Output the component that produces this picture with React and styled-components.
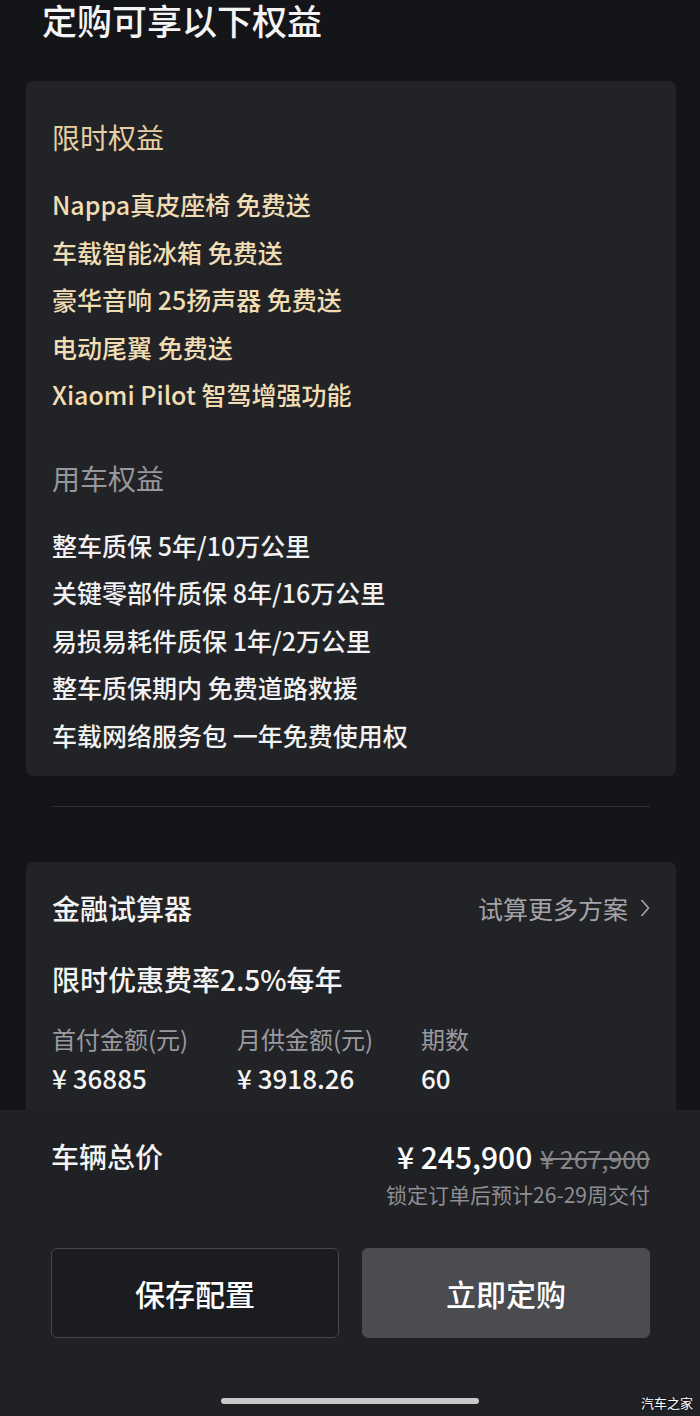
import React from "react";
import styled, { createGlobalStyle } from "styled-components";

const Global = createGlobalStyle`
    body {
        margin: 0;
        background: #141519;
        font-family: "Noto Sans CJK SC", "Noto Sans", sans-serif;
        color: #ffffff;
    }
`;

const Page = styled.div`
    padding: 0 24px 360px 26px;
`;

const Heading = styled.h1`
    margin: 0;
    padding-left: 16px;
    font-size: 35px;
    line-height: 40px;
    font-weight: 500;
    color: #f4f4f4;
`;

const Card = styled.section`
    margin-top: ${(p) => p.$top}px;
    background: #222327;
    border-radius: 7px;
    padding: ${(p) => p.$pad};
`;

const Group = styled.div`
    & + & {
        margin-top: 41px;
    }
`;

const GroupTitle = styled.h2`
    margin: 0 0 26px;
    font-size: 28px;
    line-height: 36px;
    font-weight: 400;
    color: ${(p) => (p.$gold ? "#e6cfa3" : "#97979c")};
`;

const Item = styled.div`
    font-size: 25px;
    line-height: 47.5px;
    font-weight: 500;
    color: ${(p) => (p.$gold ? "#f1ddb3" : "#f2f2f2")};
`;

const Divider = styled.hr`
    margin: 30px 26px 0;
    border: none;
    height: 1px;
    background: #2e2f34;
`;

const FinHead = styled.div`
    display: flex;
    justify-content: space-between;
    align-items: center;
    height: 36px;
`;

const FinTitle = styled.div`
    font-size: 28px;
    font-weight: 500;
    color: #f4f4f4;
`;

const MoreLink = styled.div`
    display: flex;
    align-items: center;
    gap: 12px;
    font-size: 25px;
    color: #a4a4a8;
`;

const Rate = styled.div`
    margin-top: 35px;
    font-size: 28px;
    line-height: 36px;
    font-weight: 500;
    color: #f4f4f4;
`;

const FinGrid = styled.div`
    margin-top: 27px;
    display: grid;
    grid-template-columns: 185px 184px auto;
`;

const FinLabel = styled.div`
    font-size: 24px;
    line-height: 30px;
    color: #9a9a9f;
`;

const FinValue = styled.div`
    margin-top: 8px;
    font-size: 26px;
    line-height: 32px;
    font-weight: 500;
    color: #f4f4f4;
`;

const BottomBar = styled.footer`
    position: fixed;
    left: 0;
    right: 0;
    bottom: 0;
    height: 306px;
    box-sizing: border-box;
    padding: 28px 50px 0 51px;
    background: #202125;
`;

const TotalRow = styled.div`
    display: flex;
    justify-content: space-between;
    align-items: flex-start;
`;

const TotalLabel = styled.div`
    font-size: 28px;
    line-height: 36px;
    font-weight: 500;
    color: #f4f4f4;
`;

const PriceCol = styled.div`
    display: flex;
    flex-direction: column;
    align-items: flex-end;
`;

const PriceLine = styled.div`
    display: flex;
    align-items: baseline;
    gap: 8px;
    line-height: 36px;
`;

const Price = styled.span`
    font-size: 30px;
    font-weight: 500;
    color: #ffffff;
`;

const OldPrice = styled.span`
    font-size: 25px;
    color: #85858a;
    text-decoration: line-through;
`;

const Eta = styled.div`
    margin-top: 5px;
    font-size: 21px;
    line-height: 26px;
    color: #8e8e93;
`;

const Buttons = styled.div`
    margin-top: 41px;
    display: grid;
    grid-template-columns: 1fr 1fr;
    gap: 23px;
`;

const Button = styled.button`
    height: 90px;
    border-radius: 6px;
    font-family: inherit;
    font-size: 30px;
    font-weight: 500;
    color: #ffffff;
    border: 1px solid ${(p) => (p.$primary ? "#4b4c50" : "#46474b")};
    background: ${(p) => (p.$primary ? "#4b4c50" : "#1b1c20")};
`;

const HomeIndicator = styled.div`
    position: absolute;
    left: 221px;
    bottom: 12px;
    width: 258px;
    height: 6px;
    border-radius: 3px;
    background: #c9c9c9;
`;

const Watermark = styled.div`
    position: absolute;
    right: 7px;
    bottom: 4px;
    font-size: 13px;
    color: #ffffff;
    text-shadow: 0 0 2px #000;
`;

const limited = [
    "Nappa真皮座椅 免费送",
    "车载智能冰箱 免费送",
    "豪华音响 25扬声器 免费送",
    "电动尾翼 免费送",
    "Xiaomi Pilot 智驾增强功能",
];

const usage = [
    "整车质保 5年/10万公里",
    "关键零部件质保 8年/16万公里",
    "易损易耗件质保 1年/2万公里",
    "整车质保期内 免费道路救援",
    "车载网络服务包 一年免费使用权",
];

const finance = [
    ["首付金额(元)", "¥ 36885"],
    ["月供金额(元)", "¥ 3918.26"],
    ["期数", "60"],
];

const App = () => (
    <>
        <Global />
        <Page>
            <Heading>定购可享以下权益</Heading>
            <Card $top={41} $pad="38px 26px 17px">
                <Group>
                    <GroupTitle $gold>限时权益</GroupTitle>
                    {limited.map((t) => (
                        <Item $gold key={t}>{t}</Item>
                    ))}
                </Group>
                <Group>
                    <GroupTitle>用车权益</GroupTitle>
                    {usage.map((t) => (
                        <Item key={t}>{t}</Item>
                    ))}
                </Group>
            </Card>
            <Divider />
            <Card $top={55} $pad="28px 26px 120px">
                <FinHead>
                    <FinTitle>金融试算器</FinTitle>
                    <MoreLink>
                        试算更多方案
                        <svg width="10" height="20" viewBox="0 0 10 20">
                            <path d="M1.5 2 L8.5 10 L1.5 18" fill="none" stroke="#a4a4a8" strokeWidth="1.6" />
                        </svg>
                    </MoreLink>
                </FinHead>
                <Rate>限时优惠费率2.5%每年</Rate>
                <FinGrid>
                    {finance.map(([l]) => (
                        <FinLabel key={l}>{l}</FinLabel>
                    ))}
                    {finance.map(([l, v]) => (
                        <FinValue key={v}>{v}</FinValue>
                    ))}
                </FinGrid>
            </Card>
        </Page>
        <BottomBar>
            <TotalRow>
                <TotalLabel>车辆总价</TotalLabel>
                <PriceCol>
                    <PriceLine>
                        <Price>¥ 245,900</Price>
                        <OldPrice>¥ 267,900</OldPrice>
                    </PriceLine>
                    <Eta>锁定订单后预计26-29周交付</Eta>
                </PriceCol>
            </TotalRow>
            <Buttons>
                <Button>保存配置</Button>
                <Button $primary>立即定购</Button>
            </Buttons>
            <HomeIndicator />
            <Watermark>汽车之家</Watermark>
        </BottomBar>
    </>
);

export default App;
